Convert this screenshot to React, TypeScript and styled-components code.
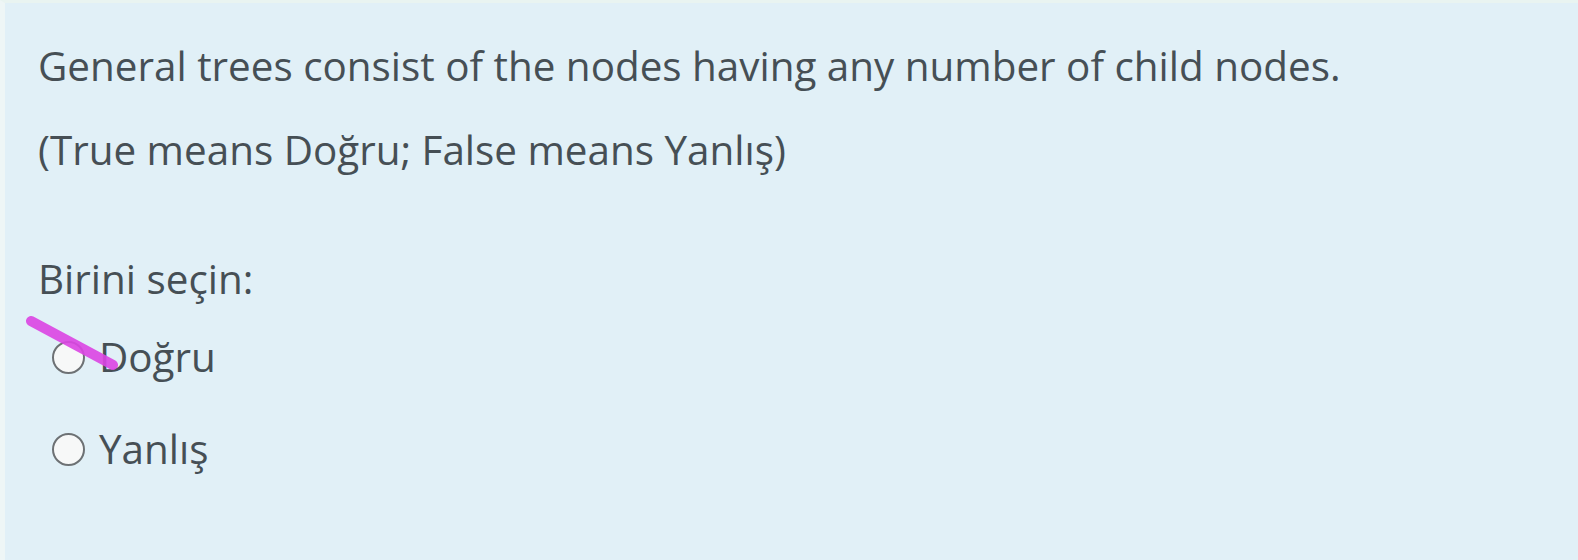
import React from 'react'
import styled, { createGlobalStyle } from 'styled-components'

const GlobalStyle = createGlobalStyle`
  html, body {
    margin: 0;
    padding: 0;
    background: #e1f0f7;
  }
  * { box-sizing: border-box; }
`

const QuestionCard = styled.div`
  position: relative;
  width: 1578px;
  height: 560px;
  background: #e1f0f7;
  border-top: 3px solid #e9f4f1;
  border-left: 5px solid #eef6f6;
  padding: 39px 0 0 33px;
  font-family: 'Open Sans', 'Noto Sans', sans-serif;
  font-size: 40.4px;
  line-height: 48px;
  color: #464f55;
`

const Prompt = styled.p<{ gap?: number }>`
  margin: 0 0 ${(p) => p.gap ?? 0}px 0;
`

const Answers = styled.div`
  display: flex;
  flex-direction: column;
  gap: 44px;
  margin-top: 30px;
  padding-left: 14px;
`

const Option = styled.label`
  display: flex;
  align-items: center;
  gap: 14px;
  height: 48px;
`

const Radio = styled.span`
  width: 33px;
  height: 33px;
  border-radius: 50%;
  border: 2px solid #6d7174;
  background: #f7f8f8;
  flex-shrink: 0;
`

const Scribble = styled.svg`
  position: absolute;
  left: 0;
  top: 0;
  pointer-events: none;
`

export default function App() {
  return (
    <>
      <GlobalStyle />
      <QuestionCard>
        <Prompt gap={36}>General trees consist of the nodes having any number of child nodes.</Prompt>
        <Prompt gap={81}>(True means Doğru; False means Yanlış)</Prompt>
        <Prompt>Birini seçin:</Prompt>
        <Answers>
          <Option>
            <Radio />
            Doğru
          </Option>
          <Option>
            <Radio />
            Yanlış
          </Option>
        </Answers>
        <Scribble width="1578" height="560" viewBox="0 0 1578 560">
          <path
            d="M26 318 L108 362"
            stroke="#dc45e4"
            strokeWidth="10"
            strokeLinecap="round"
            opacity="0.9"
          />
        </Scribble>
      </QuestionCard>
    </>
  )
}
